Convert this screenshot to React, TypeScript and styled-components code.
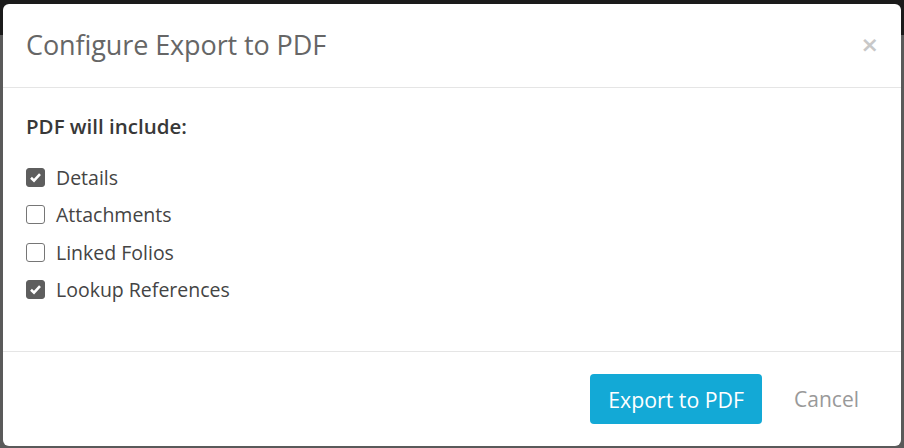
import React, { useState } from 'react';
import styled, { createGlobalStyle } from 'styled-components';

const GlobalStyle = createGlobalStyle`
    html, body {
        margin: 0;
        padding: 0;
        width: 904px;
        height: 448px;
        overflow: hidden;
        font-family: 'Open Sans', 'Noto Sans', sans-serif;
    }
`;

const Page = styled.div`
    position: relative;
    width: 904px;
    height: 448px;
    background: #5a5a5a;
    display: flex;
    flex-direction: column;
`;

const TopBar = styled.div`
    height: 35px;
    background: #1b1b1b;
`;

const Modal = styled.div`
    position: absolute;
    left: 3px;
    top: 4px;
    width: 898px;
    height: 442px;
    background: #fff;
    border-radius: 6px;
    display: flex;
    flex-direction: column;
    overflow: hidden;
`;

const Header = styled.div`
    height: 84px;
    box-sizing: border-box;
    border-bottom: 1px solid #e5e5e5;
    display: flex;
    align-items: center;
    justify-content: space-between;
    padding: 0 22px 2px 23px;
`;

const Title = styled.h4`
    margin: 0;
    font-size: 27px;
    font-weight: 400;
    color: #666;
    letter-spacing: -0.1px;
`;

const Close = styled.button`
    border: none;
    background: none;
    padding: 0;
    font-family: 'DejaVu Sans', sans-serif;
    font-size: 22px;
    font-weight: 700;
    color: #c8c8c8;
    cursor: pointer;
    line-height: 1;
`;

const Body = styled.div`
    flex: 1;
    padding: 24px 22px 0 23px;
    display: flex;
    flex-direction: column;
`;

const Lead = styled.div`
    font-size: 20.5px;
    line-height: 28px;
    font-weight: 600;
    color: #383838;
    margin-bottom: 19px;
`;

const Option = styled.label`
    display: flex;
    align-items: center;
    gap: 11px;
    height: 37.3px;
    font-size: 19.5px;
    color: #444;
    cursor: pointer;
`;

const Box = styled.span<{ $checked: boolean }>`
    width: 19px;
    height: 19px;
    box-sizing: border-box;
    border-radius: 3px;
    border: 1px solid ${(p) => (p.$checked ? '#5e5e5e' : '#767676')};
    background: ${(p) => (p.$checked ? '#5e5e5e' : '#fff')};
    display: flex;
    align-items: center;
    justify-content: center;
`;

const Footer = styled.div`
    height: 95px;
    box-sizing: border-box;
    border-top: 1px solid #e5e5e5;
    display: flex;
    align-items: center;
    justify-content: flex-end;
    padding: 0 42px 0 0;
    gap: 32px;
`;

const Primary = styled.button`
    height: 50px;
    padding: 0 18px;
    border: none;
    border-radius: 4px;
    background: #13a9d6;
    color: #fff;
    font-family: inherit;
    font-size: 21.3px;
    cursor: pointer;
`;

const Link = styled.button`
    border: none;
    background: none;
    padding: 0;
    color: #999;
    font-family: inherit;
    font-size: 21px;
    cursor: pointer;
`;

const options = ['Details', 'Attachments', 'Linked Folios', 'Lookup References'];

export default function App() {
    const [checked, setChecked] = useState<Record<string, boolean>>({
        Details: true,
        'Lookup References': true,
    });

    return (
        <Page>
            <GlobalStyle />
            <TopBar />
            <Modal>
                <Header>
                    <Title>Configure Export to PDF</Title>
                    <Close>×</Close>
                </Header>
                <Body>
                    <Lead>PDF will include:</Lead>
                    {options.map((name) => (
                        <Option key={name} onClick={() => setChecked({ ...checked, [name]: !checked[name] })}>
                            <Box $checked={!!checked[name]}>
                                {checked[name] && (
                                    <svg width="13" height="13" viewBox="0 0 13 13">
                                        <path d="M2 6.8 L5 9.6 L11 3.2" fill="none" stroke="#fff" strokeWidth="2.6" />
                                    </svg>
                                )}
                            </Box>
                            {name}
                        </Option>
                    ))}
                </Body>
                <Footer>
                    <Primary>Export to PDF</Primary>
                    <Link>Cancel</Link>
                </Footer>
            </Modal>
        </Page>
    );
}
